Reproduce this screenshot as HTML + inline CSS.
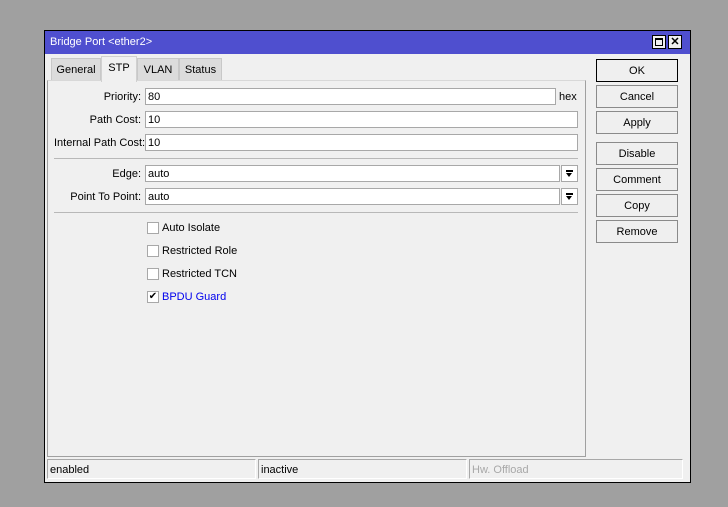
<!DOCTYPE html>
<html><head><style>
*{margin:0;padding:0;box-sizing:border-box}
body{width:728px;height:507px;background:#a0a0a0;position:relative;font-family:"Liberation Sans",sans-serif;font-size:11px;color:#000;overflow:hidden}
.a{position:absolute}
.win{left:44px;top:30px;width:647px;height:453px;background:#f0f0f0;border:1px solid #000}
.title{left:45px;top:31px;width:645px;height:23px;background:#4f4fcf;color:#fff;padding:5px 0 0 5px;font-size:11px}
.tb{width:14px;height:14px;background:#f0f0f0;border:1px solid #000;top:35px}
.tab{top:58px;height:22px;background:#dcdcdc;border:1px solid #c8c8c8;border-bottom:none;text-align:center;padding-top:5px}
.panel{left:47px;top:80px;width:539px;height:377px;border:1px solid #a0a0a0;border-top:1px solid #d8d8d8;background:#f0f0f0}
.lbl{text-align:right;width:95px;left:46px}
.in{background:#fff;border:1px solid #a8a8a8;height:17px;padding:2px 0 0 2px}
.sep{height:1px;background:#b8b8b8;left:54px;width:524px}
.dd{width:17px;height:17px;border:1px solid #a8a8a8;background:#fff;left:561px}
.dd i{position:absolute;left:4px;top:4px;width:7px;height:2px;background:#000}
.dd b{position:absolute;left:4px;top:7px;width:0;height:0;border-left:3.5px solid transparent;border-right:3.5px solid transparent;border-top:4px solid #000}
.cb{left:147px;width:12px;height:12px;background:#fff;border:1px solid #a8a8a8}
.cl{left:162px}
.btn{left:596px;width:82px;height:23px;border:1px solid #8a8a8a;background:#efefef;text-align:center;padding-top:5px}
.st{top:459px;height:20px;border:1px solid #a8a8a8;border-right-color:#fff;border-bottom-color:#fff;padding:4px 0 0 2px}
</style></head><body>
<div class="a win"></div>
<div class="a title">Bridge Port &lt;ether2&gt;</div>
<div class="a tb" style="left:652px"><div class="a" style="left:2px;top:2px;width:8px;height:8px;border:1px solid #000;border-top-width:2px"></div></div>
<div class="a tb" style="left:668px;font-size:11px;font-weight:bold;line-height:12px;text-align:center">✕</div>
<div class="a tab" style="left:51px;width:50px">General</div>
<div class="a tab" style="left:137px;width:42px">VLAN</div>
<div class="a tab" style="left:179px;width:43px">Status</div>
<div class="a panel"></div>
<div class="a tab" style="left:101px;width:36px;top:56px;height:26px;background:#f0f0f0;padding-top:5px;border-color:#d0d0d0;z-index:2">STP</div>
<div class="a lbl" style="top:91px">Priority:</div>
<div class="a in" style="left:145px;top:88px;width:411px">80</div>
<div class="a" style="left:559px;top:91px">hex</div>
<div class="a lbl" style="top:114px">Path Cost:</div>
<div class="a in" style="left:145px;top:111px;width:433px">10</div>
<div class="a" style="top:137px;left:54px">Internal Path Cost:</div>
<div class="a in" style="left:145px;top:134px;width:433px">10</div>
<div class="a sep" style="top:158px"></div>
<div class="a lbl" style="top:168px">Edge:</div>
<div class="a in" style="left:145px;top:165px;width:415px">auto</div>
<div class="a dd" style="top:165px"><i></i><b></b></div>
<div class="a lbl" style="top:191px">Point To Point:</div>
<div class="a in" style="left:145px;top:188px;width:415px">auto</div>
<div class="a dd" style="top:188px"><i></i><b></b></div>
<div class="a sep" style="top:212px"></div>
<div class="a cb" style="top:222px"></div><div class="a cl" style="top:222px">Auto Isolate</div>
<div class="a cb" style="top:245px"></div><div class="a cl" style="top:245px">Restricted Role</div>
<div class="a cb" style="top:268px"></div><div class="a cl" style="top:268px">Restricted TCN</div>
<div class="a cb" style="top:291px;font-size:10px;line-height:10px;text-align:center">✔</div><div class="a cl" style="top:291px;color:#0000ee">BPDU Guard</div>
<div class="a btn" style="top:59px;border:1px solid #000">OK</div>
<div class="a btn" style="top:85px">Cancel</div>
<div class="a btn" style="top:111px">Apply</div>
<div class="a btn" style="top:142px">Disable</div>
<div class="a btn" style="top:168px">Comment</div>
<div class="a btn" style="top:194px">Copy</div>
<div class="a btn" style="top:220px">Remove</div>
<div class="a st" style="left:47px;width:209px">enabled</div>
<div class="a st" style="left:258px;width:209px">inactive</div>
<div class="a st" style="left:469px;width:214px;color:#a8a8a8">Hw. Offload</div>
</body></html>
